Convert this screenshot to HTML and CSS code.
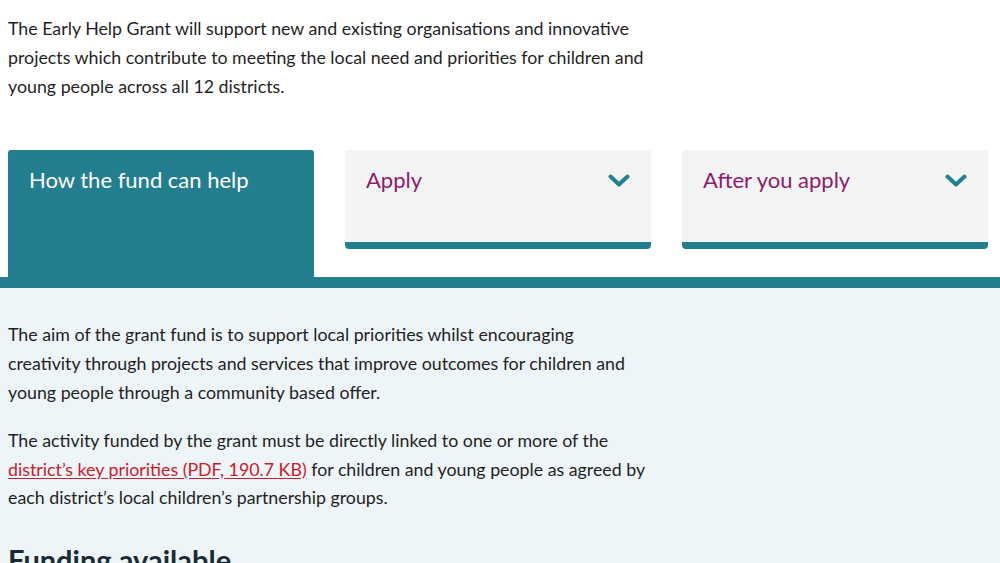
FILE: index.html
```html
<!DOCTYPE html>
<html lang="en">
<head>
<meta charset="utf-8">
<title>Early Help Grant</title>
<link rel="stylesheet" href="styles.css">
</head>
<body>
<div class="intro">
  <p>The Early Help Grant will support new and existing organisations and innovative projects which contribute to meeting the local need and priorities for children and young people across all 12 districts.</p>
</div>
<div class="tabs-wrap">
  <div class="tabs">
    <div class="tab tab-active">How the fund can help</div>
    <div class="tab">
      <span>Apply</span>
      <svg class="chev" viewBox="0 0 22 14" width="22" height="14" aria-hidden="true"><path d="M2.5 2.5 L11 10.5 L19.5 2.5" fill="none" stroke="currentColor" stroke-width="4" stroke-linecap="round" stroke-linejoin="round"/></svg>
    </div>
    <div class="tab">
      <span>After you apply</span>
      <svg class="chev" viewBox="0 0 22 14" width="22" height="14" aria-hidden="true"><path d="M2.5 2.5 L11 10.5 L19.5 2.5" fill="none" stroke="currentColor" stroke-width="4" stroke-linecap="round" stroke-linejoin="round"/></svg>
    </div>
  </div>
</div>
<div class="panel">
  <div class="panel-inner">
    <p>The aim of the grant fund is to support local priorities whilst encouraging creativity through projects and services that improve outcomes for children and young people through a community based offer.</p>
    <p>The activity funded by the grant must be directly linked to one or more of the <a href="#">district’s key priorities (PDF, 190.7 KB)</a> for children and young people as agreed by each district’s local children’s partnership groups.</p>
    <h2>Funding available</h2>
  </div>
</div>
</body>
</html>
```

FILE: styles.css
```css
html, body {
  margin: 0;
  padding: 0;
  background: #ffffff;
}
body {
  font-family: "Lato", "Liberation Sans", sans-serif;
  font-size: 17.8px;
  line-height: 28.8px;
  color: #1f1f1f;
}
p {
  margin: 0 0 19px 0;
  max-width: 641px;
}
.intro {
  padding: 14px 8px 0 8px;
}
.intro p {
  margin: 0;
}
.tabs-wrap {
  padding: 50px 12px 0 8px;
  border-bottom: 11px solid #237e90;
}
.tabs {
  display: grid;
  grid-template-columns: repeat(3, 1fr);
  column-gap: 31px;
  align-items: start;
}
.tab {
  background: #f3f4f4;
  border-radius: 3px 3px 4px 4px;
  border-bottom: 7px solid #237e90;
  height: 99px;
  padding: 16px 21px 0 21px;
  box-sizing: border-box;
  font-size: 22px;
  line-height: 28px;
  color: #8e1b6c;
  display: flex;
  justify-content: space-between;
  align-items: flex-start;
}
.tab-active {
  background: #237e90;
  color: #ffffff;
  border-bottom: 0;
  border-radius: 3px 3px 0 0;
  height: 127px;
}
.chev {
  color: #237e90;
  margin-top: 8px;
  margin-right: 0;
}
.panel {
  background: #edf5f8;
  padding: 32px 8px 0 8px;
  height: 400px;
}
.panel a {
  color: #c8202a;
  text-decoration: underline;
  text-underline-offset: 2px;
}
h2 {
  margin: 30px 0 0 0;
  font-size: 29px;
  line-height: 36px;
  font-weight: 700;
  color: #1b2b33;
}
```
